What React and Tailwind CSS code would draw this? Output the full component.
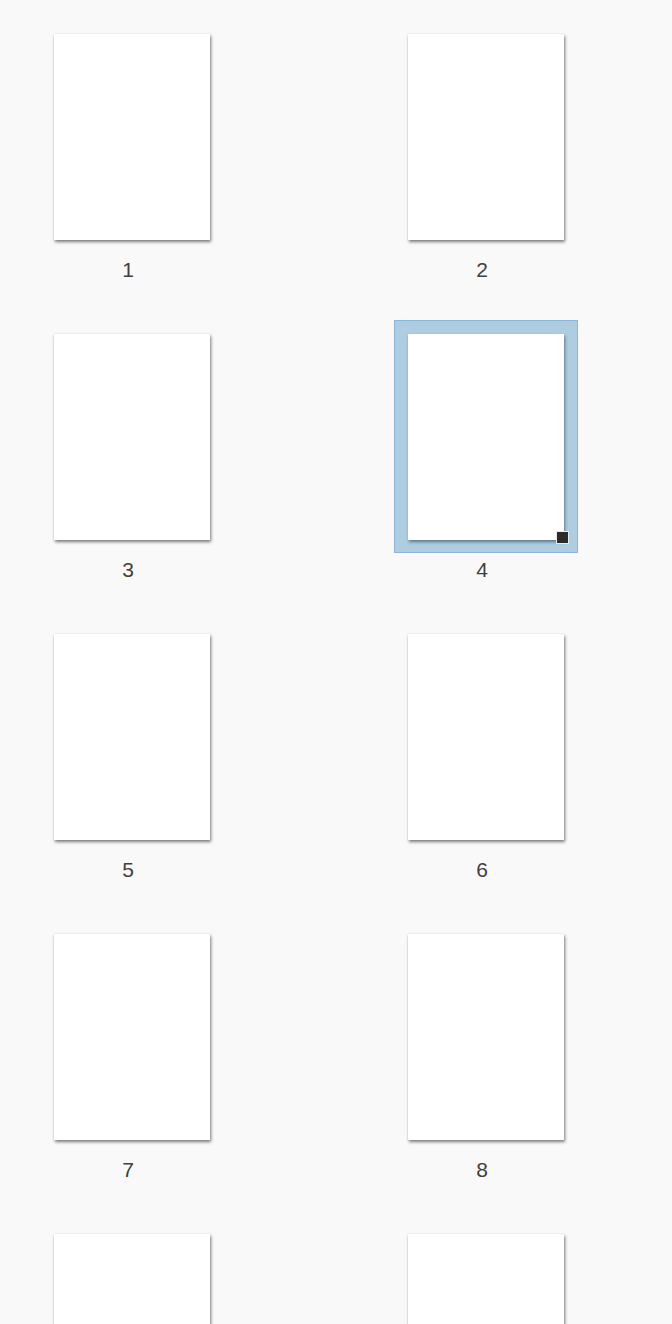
import React, { useState } from 'react';

const pages = Array.from({ length: 10 }, (_, i) => i + 1);

const PageThumb = ({ num, selected, onSelect }) => (
  <div className="flex flex-col items-start">
    <button
      onClick={onSelect}
      className={`relative w-[184px] h-[233px] p-[13px] border ${
        selected ? 'bg-[#aecde0] border-[#8db5d9]' : 'bg-transparent border-transparent'
      }`}
    >
      <div
        className={`w-[156px] h-[206px] bg-white ${
          selected
            ? 'shadow-[1px_2px_3px_rgba(40,60,80,0.6)]'
            : 'shadow-[1px_2px_3px_rgba(0,0,0,0.5),0_0_1px_rgba(0,0,0,0.12)]'
        }`}
      />
      {selected && (
        <span className="absolute left-[161px] top-[210px] w-[13px] h-[13px] bg-[#2b2b2b] border border-[#e4ecf2]" />
      )}
    </button>
    {num <= 8 && (
      <div className="w-[176px] h-[67px] text-center leading-[34px] text-[21px] text-[#404040]">
        {num}
      </div>
    )}
  </div>
);

export default function App() {
  const [selected, setSelected] = useState(4);

  return (
    <div
      className="h-[1324px] overflow-hidden bg-[#f9f9f9] pl-[40px] pt-[20px]"
      style={{ fontFamily: '"Liberation Sans", Arial, sans-serif' }}
    >
      <div className="grid grid-cols-[184px_184px] gap-x-[170px]">
        {pages.map((n) => (
          <PageThumb key={n} num={n} selected={n === selected} onSelect={() => setSelected(n)} />
        ))}
      </div>
    </div>
  );
}
